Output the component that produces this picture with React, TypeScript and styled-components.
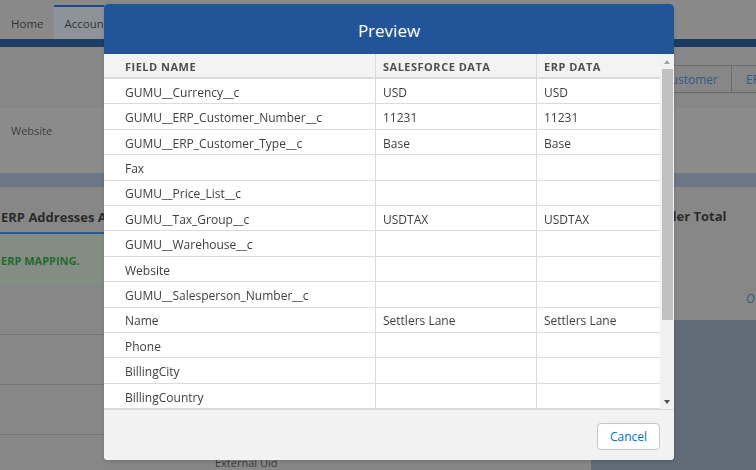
import React from "react";
import styled, { createGlobalStyle } from "styled-components";

const Global = createGlobalStyle`
  html, body { margin: 0; padding: 0; }
  body { font-family: "Open Sans", "Liberation Sans", sans-serif; background: #878787; }
  * { box-sizing: border-box; }
`;

const Page = styled.div`
  width: 756px;
  height: 470px;
  overflow: hidden;
  background: #878787;
  display: flex;
  flex-direction: column;
`;

const NavBar = styled.div`
  display: flex;
  height: 39px;
  background: #898989;
  flex-shrink: 0;
`;

const NavTab = styled.div<{ $active?: boolean }>`
  display: flex;
  align-items: center;
  margin-top: 5px;
  padding: 1px ${(p) => (p.$active ? "12px" : "10px")} 0 11px;
  font-size: 11.5px;
  color: #363636;
  background: ${(p) => (p.$active ? "#8e9299" : "transparent")};
  border-top: 2px solid ${(p) => (p.$active ? "#1d4a80" : "transparent")};
`;

const BrandBand = styled.div`
  height: 8px;
  flex-shrink: 0;
  background: linear-gradient(90deg, #1e3e63 0%, #203f63 40%, #1c3a5e 100%);
`;

const RecordHeader = styled.div`
  height: 61px;
  flex-shrink: 0;
  display: flex;
  justify-content: flex-start;
  align-items: flex-start;
  padding: 18px 0 0 648px;
  overflow: hidden;
  background: #878787;
`;

const TabLink = styled.div`
  height: 28px;
  flex-shrink: 0;
  display: flex;
  align-items: center;
  padding: 0 13px 0 14px;
  font-size: 12px;
  color: #2f5a86;
  border: 1px solid #6c6c6c;
  border-right: none;
  white-space: nowrap;
`;

const DetailStrip = styled.div`
  height: 65px;
  flex-shrink: 0;
  background: #8b8b8b;
  padding: 15px 11px;
  font-size: 11px;
  color: #3f3f3f;
`;

const GrayBand = styled.div`
  height: 14px;
  flex-shrink: 0;
  background: #6d7686;
`;

const Content = styled.div`
  flex: 1;
  display: grid;
  grid-template-columns: 591px 1fr;
`;

const LeftColumn = styled.div`
  display: flex;
  flex-direction: column;
  background: #878787;
`;

const CardTitle = styled.div`
  height: 47px;
  display: flex;
  align-items: center;
  padding: 15px 0 0 1px;
  font-size: 13px;
  font-weight: 700;
  color: #2b2b2b;
  border-bottom: 2px solid #2c5a8e;
  white-space: nowrap;
`;

const MappingNotice = styled.div`
  height: 51px;
  display: flex;
  align-items: center;
  padding: 2px 0 0 1px;
  background: #848d84;
  font-size: 11px;
  font-weight: 700;
  color: #1f6a2c;
`;

const ListRow = styled.div`
  height: 50px;
  flex-shrink: 0;
  border-bottom: 1px solid #767676;
  padding: 20px 0 0 215px;
  font-size: 11px;
  color: #3a3a3a;
`;

const RightColumn = styled.div`
  display: flex;
  flex-direction: column;
  background: #626b78;
`;

const SideCard = styled.div`
  height: 133px;
  background: #878787;
  display: flex;
  flex-direction: column;
  padding: 20px 0 0 61px;
`;

const SideTitle = styled.div`
  font-size: 13px;
  font-weight: 700;
  color: #2b2b2b;
  white-space: nowrap;
`;

const SideLink = styled.div`
  margin-top: 65px;
  padding-left: 94px;
  font-size: 12px;
  font-style: italic;
  color: #30597f;
  white-space: nowrap;
`;

/* ---------- modal ---------- */

const Modal = styled.div`
  position: fixed;
  top: 4px;
  left: 104px;
  width: 570px;
  height: 456px;
  display: flex;
  flex-direction: column;
  background: #ffffff;
  border-radius: 4px;
  overflow: hidden;
  box-shadow: 0 2px 4px rgba(0, 0, 0, 0.12);
`;

const ModalHeader = styled.div`
  height: 50px;
  flex-shrink: 0;
  display: flex;
  align-items: center;
  justify-content: center;
  padding-top: 2px;
  background: #22549a;
  color: #ffffff;
  font-size: 17px;
  font-weight: 400;
`;

const ModalBody = styled.div`
  flex: 1;
  display: flex;
  min-height: 0;
`;

const TableArea = styled.div`
  flex: 1;
  overflow: hidden;
  display: flex;
  flex-direction: column;
`;

const Row = styled.div<{ $head?: boolean }>`
  display: grid;
  grid-template-columns: 272px 161px 1fr;
  flex-shrink: 0;
  height: ${(p) => (p.$head ? "25px" : "25.42px")};
  background: ${(p) => (p.$head ? "#f3f3f3" : "#ffffff")};
  border-bottom: ${(p) => (p.$head ? "2px" : "1px")} solid #dddbda;
`;

const Cell = styled.div<{ $first?: boolean; $last?: boolean; $head?: boolean }>`
  display: flex;
  align-items: center;
  padding-top: 2px;
  padding-left: ${(p) => (p.$first ? "21px" : "7px")};
  border-right: ${(p) => (p.$last ? "none" : "1px solid #dddbda")};
  font-size: ${(p) => (p.$head ? "11px" : "12px")};
  font-weight: ${(p) => (p.$head ? 700 : 400)};
  letter-spacing: ${(p) => (p.$head ? "0.5px" : "0")};
  color: ${(p) => (p.$head ? "#514f4d" : "#3e3e3c")};
  white-space: nowrap;
  overflow: hidden;
`;

const Scrollbar = styled.div`
  width: 14px;
  flex-shrink: 0;
  background: #f1f1f1;
  display: flex;
  flex-direction: column;
  align-items: center;
`;

const ScrollArrow = styled.div<{ $down?: boolean }>`
  height: 15px;
  width: 100%;
  display: flex;
  align-items: center;
  justify-content: center;
  &::after {
    content: "";
    width: 0;
    height: 0;
    border-left: 3.5px solid transparent;
    border-right: 3.5px solid transparent;
    ${(p) =>
      p.$down
        ? "border-top: 4px solid #505050;"
        : "border-bottom: 4px solid #a3a3a3;"}
  }
`;

const ScrollThumb = styled.div`
  width: 11px;
  height: 251px;
  margin-left: 1px;
  background: #c1c1c1;
`;

const ScrollSpacer = styled.div`
  flex: 1;
`;

const ModalFooter = styled.div`
  height: 51px;
  flex-shrink: 0;
  display: flex;
  align-items: center;
  justify-content: flex-end;
  padding: 2px 14px 0 0;
  background: #f3f2f2;
  border-top: 1px solid #dddbda;
`;

const Button = styled.button`
  height: 27px;
  width: 63px;
  border: 1px solid #c9c7c5;
  border-radius: 4px;
  background: #ffffff;
  color: #0070d2;
  font-family: "Open Sans", "Liberation Sans", sans-serif;
  font-size: 12px;
  cursor: pointer;
`;

type Field = { name: string; sf: string; erp: string };

const fields: Field[] = [
  { name: "GUMU__Currency__c", sf: "USD", erp: "USD" },
  { name: "GUMU__ERP_Customer_Number__c", sf: "11231", erp: "11231" },
  { name: "GUMU__ERP_Customer_Type__c", sf: "Base", erp: "Base" },
  { name: "Fax", sf: "", erp: "" },
  { name: "GUMU__Price_List__c", sf: "", erp: "" },
  { name: "GUMU__Tax_Group__c", sf: "USDTAX", erp: "USDTAX" },
  { name: "GUMU__Warehouse__c", sf: "", erp: "" },
  { name: "Website", sf: "", erp: "" },
  { name: "GUMU__Salesperson_Number__c", sf: "", erp: "" },
  { name: "Name", sf: "Settlers Lane", erp: "Settlers Lane" },
  { name: "Phone", sf: "", erp: "" },
  { name: "BillingCity", sf: "", erp: "" },
  { name: "BillingCountry", sf: "", erp: "" },
  { name: "BillingPostalCode", sf: "", erp: "" },
  { name: "BillingState", sf: "", erp: "" },
  { name: "BillingStreet", sf: "", erp: "" },
];

export default function App() {
  return (
    <>
      <Global />
      <Page>
        <NavBar>
          <NavTab>Home</NavTab>
          <NavTab $active>Accounts</NavTab>
        </NavBar>
        <BrandBand />
        <RecordHeader>
          <TabLink>Customer</TabLink>
          <TabLink>ERP Details</TabLink>
        </RecordHeader>
        <DetailStrip>Website</DetailStrip>
        <GrayBand />
        <Content>
          <LeftColumn>
            <CardTitle>ERP Addresses Area</CardTitle>
            <MappingNotice>ERP MAPPING.</MappingNotice>
            <ListRow />
            <ListRow />
            <ListRow />
            <ListRow>External Uid</ListRow>
          </LeftColumn>
          <RightColumn>
            <SideCard>
              <SideTitle>Order Total</SideTitle>
              <SideLink>O</SideLink>
            </SideCard>
          </RightColumn>
        </Content>
      </Page>

      <Modal>
        <ModalHeader>Preview</ModalHeader>
        <ModalBody>
          <TableArea>
            <Row $head>
              <Cell $head $first>FIELD NAME</Cell>
              <Cell $head>SALESFORCE DATA</Cell>
              <Cell $head $last>ERP DATA</Cell>
            </Row>
            {fields.map((f) => (
              <Row key={f.name}>
                <Cell $first>{f.name}</Cell>
                <Cell>{f.sf}</Cell>
                <Cell $last>{f.erp}</Cell>
              </Row>
            ))}
          </TableArea>
          <Scrollbar>
            <ScrollArrow />
            <ScrollThumb />
            <ScrollSpacer />
            <ScrollArrow $down />
          </Scrollbar>
        </ModalBody>
        <ModalFooter>
          <Button>Cancel</Button>
        </ModalFooter>
      </Modal>
    </>
  );
}
